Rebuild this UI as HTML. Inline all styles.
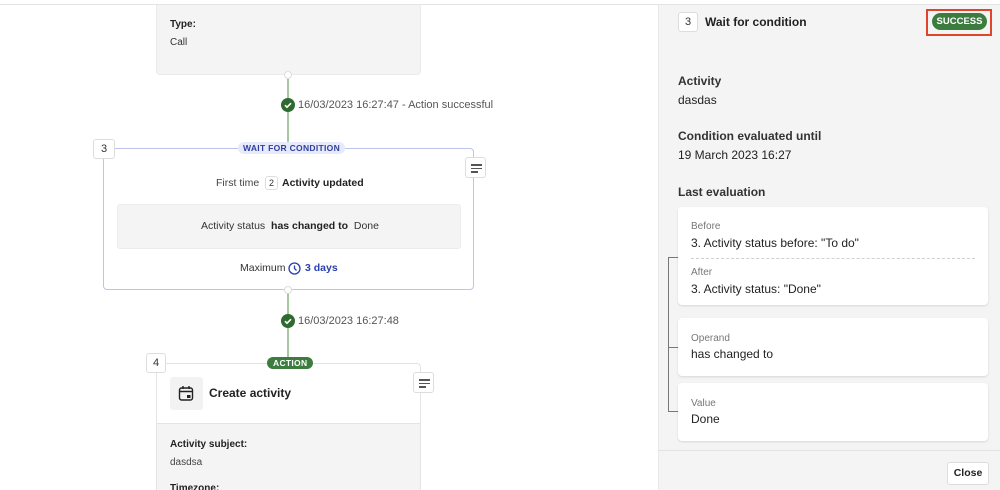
<!DOCTYPE html>
<html><head><meta charset="utf-8"><style>
*{box-sizing:border-box;margin:0;padding:0}
html,body{width:1000px;height:490px;overflow:hidden}
body{background:#fff;font-family:"Liberation Sans",sans-serif;color:#222;position:relative}
.a{position:absolute}
.t{position:absolute;white-space:nowrap;line-height:1}
.num{position:absolute;background:#fff;border:1px solid #ddd;border-radius:3px;font-size:11px;display:flex;align-items:center;justify-content:center;color:#333}
.menu{position:absolute;background:#fff;border:1px solid #ddd;border-radius:3px;width:21px;height:21px}
.menu i{position:absolute;left:5px;height:1.5px;background:#555}
.card{position:absolute;background:#fff;border-radius:4px;box-shadow:0 1px 2px rgba(0,0,0,.12)}
.lbl{font-size:10px;color:#777}
.val{font-size:12px;color:#222}
</style></head><body>
<div class="a" style="left:0;top:4px;width:1000px;height:1px;background:#e4e4e4"></div>
<div class="a" style="left:156px;top:5px;width:265px;height:70px;background:#f4f4f4;border:1px solid #eaeaea;border-top:none;border-radius:0 0 4px 4px"></div>
<div class="t" style="left:170px;top:20px;font-size:10px;font-weight:bold">Type:</div>
<div class="t" style="left:170px;top:38px;font-size:10px;color:#333">Call</div>
<div class="a" style="left:287px;top:76px;width:2px;height:72px;background:#a5c89f"></div>
<div class="a" style="left:284px;top:71px;width:8px;height:8px;border-radius:50%;background:#fff;border:1px solid #ddd"></div>
<svg class="a" style="left:281px;top:98px" width="14" height="14"><circle cx="7" cy="7" r="7" fill="#2f6b31"/><path d="M4 7.2l2 2 4-4" stroke="#fff" stroke-width="1.6" fill="none"/></svg>
<div class="t" style="left:298px;top:100px;font-size:11px;color:#555">16/03/2023 16:27:47 - Action successful</div>
<div class="a" style="left:103px;top:148px;width:371px;height:142px;border:1px solid #bcc4ee;border-radius:4px"></div>
<div class="t" style="left:238px;top:142px;height:12px;padding:2px 5px;background:#e6eafb;border-radius:7px;font-size:8.5px;font-weight:bold;color:#2f3fa0;letter-spacing:.3px">WAIT FOR CONDITION</div>
<div class="num" style="left:93px;top:139px;width:22px;height:20px">3</div>
<div class="menu" style="left:465px;top:157px"><i style="top:6px;width:11px"></i><i style="top:9.5px;width:11px"></i><i style="top:13px;width:7px"></i></div>
<div class="t" style="left:216px;top:178px;font-size:10.5px;color:#444">First time</div>
<div class="num" style="left:265px;top:176px;width:13px;height:14px;font-size:9px">2</div>
<div class="t" style="left:282px;top:178px;font-size:10.5px;font-weight:bold">Activity updated</div>
<div class="a" style="left:117px;top:204px;width:344px;height:45px;background:#f4f4f4;border-radius:3px;border:1px solid #ececec"></div>
<div class="t" style="left:201px;top:221px;font-size:10.5px;color:#333">Activity status <b style="color:#222">&nbsp;has changed to&nbsp;</b> Done</div>
<div class="t" style="left:240px;top:263px;font-size:10.5px;color:#333">Maximum</div>
<svg class="a" style="left:288px;top:262px" width="13" height="13"><circle cx="6.5" cy="6.5" r="5.5" stroke="#2840b0" stroke-width="1.3" fill="none"/><path d="M6.5 3.5v3l2 2" stroke="#2840b0" stroke-width="1.3" fill="none"/></svg>
<div class="t" style="left:305px;top:263px;font-size:10.5px;color:#2840b0;font-weight:bold">3 days</div>
<div class="a" style="left:287px;top:291px;width:2px;height:66px;background:#a5c89f"></div>
<div class="a" style="left:284px;top:286px;width:8px;height:8px;border-radius:50%;background:#fff;border:1px solid #ddd"></div>
<svg class="a" style="left:281px;top:314px" width="14" height="14"><circle cx="7" cy="7" r="7" fill="#2f6b31"/><path d="M4 7.2l2 2 4-4" stroke="#fff" stroke-width="1.6" fill="none"/></svg>
<div class="t" style="left:298px;top:316px;font-size:11px;color:#555">16/03/2023 16:27:48</div>
<div class="a" style="left:156px;top:363px;width:265px;height:127px;border:1px solid #e4e4e4;border-bottom:none;border-radius:4px 4px 0 0;background:#fff"></div>
<div class="a" style="left:157px;top:423px;width:263px;height:67px;background:#f4f4f4;border-top:1px solid #e4e4e4"></div>
<div class="t" style="left:267px;top:357px;height:12px;padding:2px 6px;background:#3c7d3f;border-radius:7px;font-size:8.5px;font-weight:bold;color:#fff;letter-spacing:.3px">ACTION</div>
<div class="num" style="left:146px;top:353px;width:20px;height:20px">4</div>
<div class="menu" style="left:413px;top:372px"><i style="top:6px;width:11px"></i><i style="top:9.5px;width:11px"></i><i style="top:13px;width:7px"></i></div>
<div class="a" style="left:170px;top:377px;width:33px;height:33px;background:#f2f2f2;border-radius:3px"></div>
<svg class="a" style="left:178px;top:385px" width="16" height="17"><rect x="1.5" y="3" width="13" height="12" rx="2" stroke="#222" stroke-width="1.4" fill="none"/><path d="M5 1v3M11 1v3M1.5 6.5h13" stroke="#222" stroke-width="1.4"/><rect x="9" y="10" width="3.5" height="3" fill="#222"/></svg>
<div class="t" style="left:209px;top:387px;font-size:12px;font-weight:bold">Create activity</div>
<div class="t" style="left:170px;top:440px;font-size:10px;font-weight:bold">Activity subject:</div>
<div class="t" style="left:170px;top:458px;font-size:10px;color:#444">dasdsa</div>
<div class="t" style="left:170px;top:484px;font-size:10px;font-weight:bold">Timezone:</div>
<div class="a" style="left:658px;top:5px;width:342px;height:485px;background:#f4f4f4;border-left:1px solid #e8e8e8"></div>
<div class="num" style="left:678px;top:12px;width:20px;height:20px">3</div>
<div class="t" style="left:705px;top:16px;font-size:12px;font-weight:bold">Wait for condition</div>
<div class="a" style="left:926px;top:9px;width:66px;height:27px;border:2px solid #e0452b"></div>
<div class="t" style="left:932px;top:13px;width:55px;height:17px;background:#3c7d3f;border-radius:9px;color:#fff;font-size:9.5px;font-weight:bold;display:flex;align-items:center;justify-content:center">SUCCESS</div>
<div class="t" style="left:678px;top:75px;font-size:12px;font-weight:bold;color:#333">Activity</div>
<div class="t" style="left:678px;top:94px;font-size:12px">dasdas</div>
<div class="t" style="left:678px;top:130px;font-size:12px;font-weight:bold;color:#333">Condition evaluated until</div>
<div class="t" style="left:678px;top:149px;font-size:12px">19 March 2023 16:27</div>
<div class="t" style="left:678px;top:186px;font-size:12px;font-weight:bold;color:#333">Last evaluation</div>
<div class="a" style="left:668px;top:257px;width:10px;height:155px;border:1px solid #777;border-right:none"></div>
<div class="a" style="left:668px;top:347px;width:10px;height:1px;background:#777"></div>
<div class="card" style="left:678px;top:207px;width:310px;height:98px"></div>
<div class="t lbl" style="left:691px;top:222px">Before</div>
<div class="t val" style="left:691px;top:237px">3. Activity status before: "To do"</div>
<div class="a" style="left:691px;top:258px;width:284px;border-top:1px dashed #d0d0d0"></div>
<div class="t lbl" style="left:691px;top:268px">After</div>
<div class="t val" style="left:691px;top:283px">3. Activity status: "Done"</div>
<div class="card" style="left:678px;top:318px;width:310px;height:58px"></div>
<div class="t lbl" style="left:691px;top:334px">Operand</div>
<div class="t val" style="left:691px;top:348px">has changed to</div>
<div class="card" style="left:678px;top:383px;width:310px;height:58px"></div>
<div class="t lbl" style="left:691px;top:399px">Value</div>
<div class="t val" style="left:691px;top:413px">Done</div>
<div class="a" style="left:659px;top:450px;width:341px;height:1px;background:#e2e2e2"></div>
<div class="t" style="left:947px;top:462px;width:42px;height:23px;background:#fff;border:1px solid #ddd;border-radius:3px;font-size:10.5px;font-weight:bold;display:flex;align-items:center;justify-content:center">Close</div>
</body></html>
